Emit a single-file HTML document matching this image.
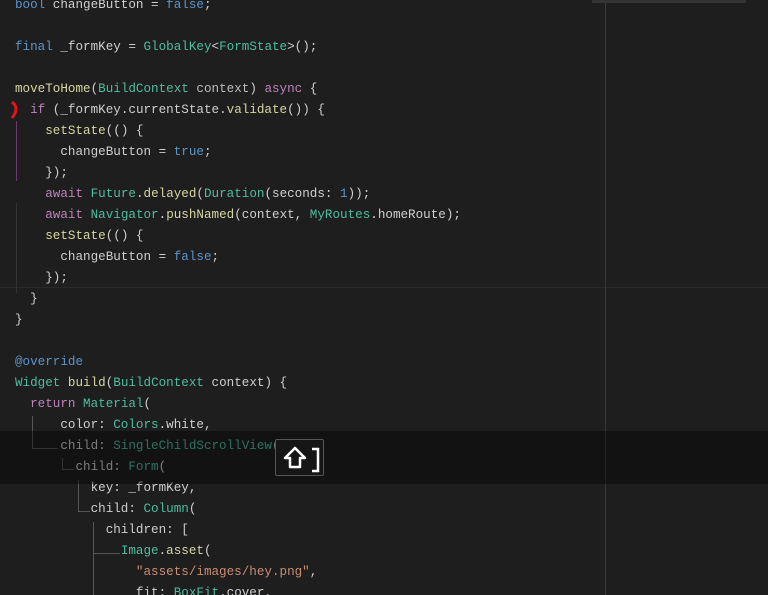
<!DOCTYPE html>
<html><head><meta charset="utf-8"><style>
html,body{margin:0;padding:0;background:#1e1e1e;width:768px;height:595px;overflow:hidden;position:relative}
pre{position:absolute;left:15px;top:-5px;margin:0;font-family:"Liberation Mono",monospace;font-size:12.6px;line-height:21px;color:#cfcfcf;white-space:pre}
.k{color:#5b95c9}.f{color:#d6d6a4}.c{color:#4dbd9f}.p{color:#bf82bb}.s{color:#c98f72}.g{color:#bdbdbd}
.band{position:absolute;left:0;top:431px;width:768px;height:53px;background:rgba(0,0,0,0.4)}
.key{position:absolute;left:275px;top:439px;width:49px;height:37px;background:#161616;border:1px solid #555;border-radius:2px;box-sizing:border-box}
.vl{position:absolute;left:605px;top:0;width:1px;height:595px;background:#3a3a3a}
.hl{position:absolute;left:0;width:768px;height:1px;background:#2a2a2a}
.g1{position:absolute;width:1px;background:#555}
</style></head><body>
<div class="hl" style="top:287px"></div>
<div class="vl"></div>
<div style="position:absolute;left:592px;top:0;width:154px;height:3px;background:#333"></div>
<div style="position:absolute;left:16px;top:121px;width:1px;height:60px;background:#6a3d6a"></div>
<div class="g1" style="left:16px;top:203px;height:90px;background:#333"></div>
<div class="g1" style="left:32px;top:416px;height:33px"></div>
<div style="position:absolute;left:32px;top:448px;width:26px;height:1px;background:#555"></div>
<div class="g1" style="left:62px;top:458px;height:12px"></div>
<div style="position:absolute;left:62px;top:469px;width:12px;height:1px;background:#555"></div>
<div class="g1" style="left:78px;top:480px;height:32px"></div>
<div style="position:absolute;left:78px;top:511px;width:12px;height:1px;background:#555"></div>
<div class="g1" style="left:93px;top:522px;height:76px"></div>
<div style="position:absolute;left:93px;top:553px;width:27px;height:1px;background:#555"></div>
<svg style="position:absolute;left:8px;top:100px" width="16" height="22"><path d="M4 2 Q12 8 4 18" stroke="#e01515" stroke-width="3" fill="none"/></svg>
<pre><span class="k">bool</span> changeButton = <span class="k">false</span>;

<span class="k">final</span> _formKey = <span class="c">GlobalKey</span>&lt;<span class="c">FormState</span>&gt;();

<span class="f">moveToHome</span>(<span class="c">BuildContext</span> <span class="g">context</span>) <span class="p">async</span> {
  <span class="p">if</span> (_formKey.currentState.<span class="f">validate</span>()) {
    <span class="f">setState</span>(() {
      changeButton = <span class="k">true</span>;
    });
    <span class="p">await</span> <span class="c">Future</span>.<span class="f">delayed</span>(<span class="c">Duration</span>(seconds: <span class="k">1</span>));
    <span class="p">await</span> <span class="c">Navigator</span>.<span class="f">pushNamed</span>(context, <span class="c">MyRoutes</span>.homeRoute);
    <span class="f">setState</span>(() {
      changeButton = <span class="k">false</span>;
    });
  }
}

<span class="k">@override</span>
<span class="c">Widget</span> <span class="f">build</span>(<span class="c">BuildContext</span> context) {
  <span class="p">return</span> <span class="c">Material</span>(
      color: <span class="c">Colors</span>.white,
      child: <span class="c">SingleChildScrollView</span>(
        child: <span class="c">Form</span>(
          key: _formKey,
          child: <span class="c">Column</span>(
            children: [
              <span class="c">Image</span>.<span class="f">asset</span>(
                <span class="s">"assets/images/hey.png"</span>,
                fit: <span class="c">BoxFit</span>.cover,</pre>
<div class="band"></div>
<div class="key"><svg width="49" height="37"><path d="M19 8 L29 18 L24 18 L24 27 L14 27 L14 18 L9 18 Z" stroke="#fff" stroke-width="2.5" fill="none" stroke-linejoin="round"/><path d="M36 9 L42 9 L42 31 L36 31" stroke="#fff" stroke-width="2.5" fill="none"/></svg></div>
</body></html>
